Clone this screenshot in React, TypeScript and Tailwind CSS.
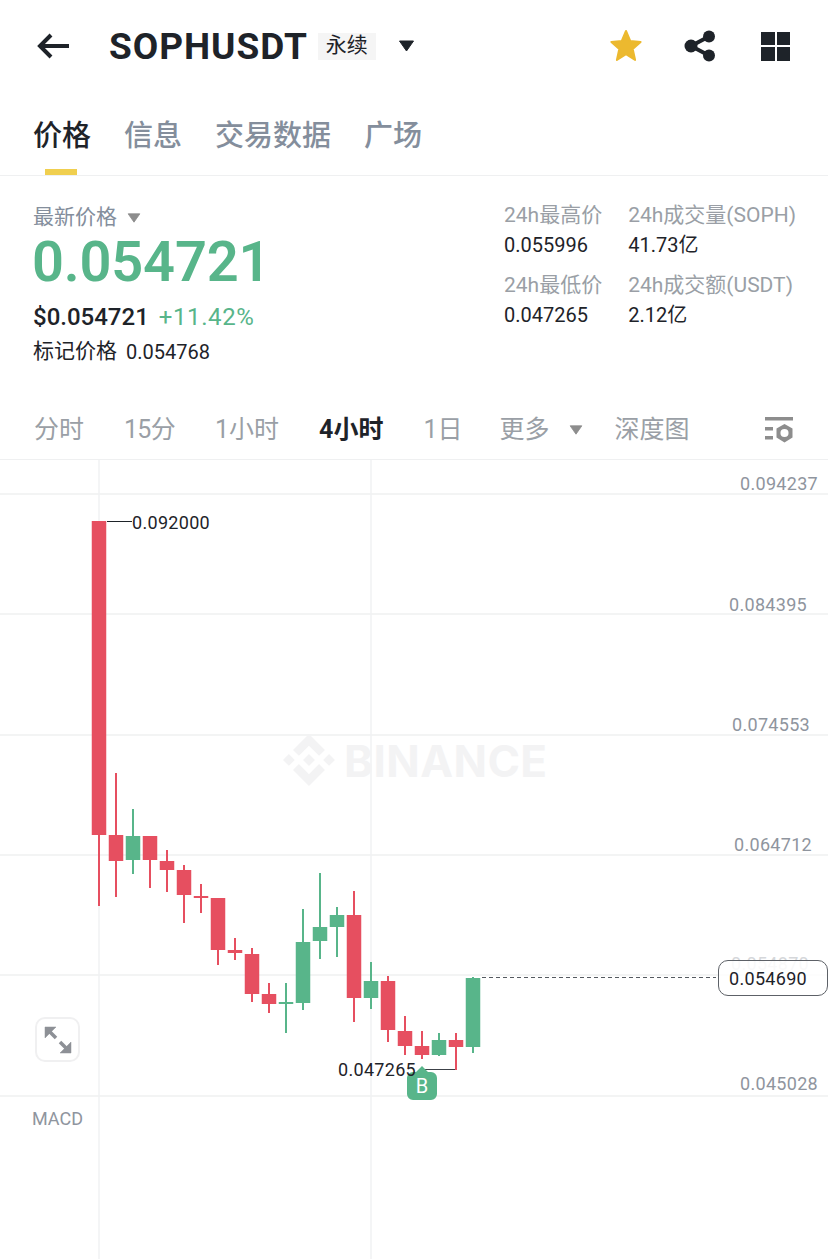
const RED = "#e64f60";
const GREEN = "#58b58a";

// x, wick top, wick bottom, body top, body bottom, rising
const candles: [number, number, number, number, number, boolean][] = [
  [99, 521, 906, 521, 835, false],
  [116, 773, 897, 835, 861, false],
  [133, 809, 874, 836, 860, true],
  [150, 836, 888, 836, 860, false],
  [167, 850, 892, 861, 870, false],
  [184, 865, 923, 870, 895, false],
  [201, 884, 913, 896, 898, false],
  [218, 898, 965, 898, 950, false],
  [235, 938, 960, 950, 953, false],
  [252, 948, 1002, 954, 994, false],
  [269, 983, 1013, 994, 1004, false],
  [286, 983, 1033, 1002, 1004, true],
  [303, 909, 1010, 942, 1003, true],
  [320, 873, 959, 927, 941, true],
  [337, 907, 957, 915, 927, true],
  [354, 891, 1022, 915, 998, false],
  [371, 962, 1009, 981, 998, true],
  [388, 976, 1042, 981, 1030, false],
  [405, 1016, 1055, 1031, 1046, false],
  [422, 1031, 1059, 1046, 1055, false],
  [439, 1033, 1056, 1040, 1055, true],
  [456, 1033, 1070, 1040, 1047, false],
  [473, 977, 1053, 978, 1047, true],
];

const gridYs = [494, 614, 735, 855, 975, 1096];

const priceLabels = [
  { text: "0.094237", left: "left-[740px]", top: "top-[13px]" },
  { text: "0.084395", left: "left-[729px]", top: "top-[134px]" },
  { text: "0.074553", left: "left-[732px]", top: "top-[254px]" },
  { text: "0.064712", left: "left-[734px]", top: "top-[374px]" },
  { text: "0.045028", left: "left-[740px]", top: "top-[613px]" },
];

function Caret({ className }: { className: string }) {
  return (
    <svg viewBox="0 0 16 12" className={className}>
      <path d="M1 1h14L8 11z" fill="currentColor" stroke="currentColor" strokeLinejoin="round" />
    </svg>
  );
}

function Header() {
  return (
    <div className="flex h-[92px] items-center pl-[37px] pr-[38px] text-[#1e2329]">
      <svg viewBox="0 0 32 26" className="h-[26px] w-8" fill="none" stroke="currentColor" strokeWidth="4">
        <path d="M32 13H4M14 2 3 13l11 11" />
      </svg>
      <div className="ml-10 text-[37px] leading-none font-bold tracking-[0.95px]">SOPHUSDT</div>
      <div className="ml-[10px] flex h-[27px] w-[58px] items-center justify-center bg-[#f5f5f5] text-[21px]">永续</div>
      <Caret className="ml-[22px] h-3 w-[17px]" />
      <svg viewBox="0 0 32 34" className="ml-auto mr-[-1px] h-[34px] w-8">
        <path
          d="M16 2l4.2 10 10.4 1-7.9 7 2.4 11L16 25.2 6.9 31l2.4-11-7.9-7 10.4-1z"
          fill="#ecb92f"
          stroke="#ecb92f"
          strokeWidth="2"
          strokeLinejoin="round"
        />
      </svg>
      <svg viewBox="0 0 32 32" className="ml-[43px] h-8 w-8" fill="currentColor">
        <circle cx="25" cy="6.5" r="6" />
        <circle cx="25" cy="25.5" r="6" />
        <circle cx="7" cy="16" r="6.5" />
        <path d="M7 16 25 6.5M7 16l18 9.5" stroke="currentColor" strokeWidth="4" />
      </svg>
      <div className="ml-[45px] grid h-[29px] w-[29px] grid-cols-2 gap-[2px]">
        <div className="bg-[#1e2329]" />
        <div className="bg-[#1e2329]" />
        <div className="bg-[#1e2329]" />
        <div className="bg-[#1e2329]" />
      </div>
    </div>
  );
}

function Tabs() {
  return (
    <div className="flex h-[84px] gap-[33px] border-b border-[#eff0f1] pl-[33px] text-[29px] leading-[88px] font-medium text-[#848e9c]">
      <div className="relative text-[#1e2329]">
        价格
        <div className="absolute bottom-0 left-3 h-[6px] w-8 bg-[#f0cf4f]" />
      </div>
      <div>信息</div>
      <div>交易数据</div>
      <div>广场</div>
    </div>
  );
}

function Stat({ label, value }: { label: string; value: string }) {
  return (
    <div>
      <div className="h-[30px] text-[21px] leading-[30px] whitespace-nowrap text-[#9a9fa6]">{label}</div>
      <div className="mt-[1px] h-[39px] text-[20px] leading-[28px] text-[#1e2329]">{value}</div>
    </div>
  );
}

function Summary() {
  return (
    <div className="flex h-[222px] pl-[33px]">
      <div className="w-[471px] pt-[27px]">
        <div className="flex h-[30px] items-center text-[21px] text-[#848e9c]">
          最新价格
          <Caret className="ml-[10px] h-[10px] w-[14px] text-[#8d8d8d]" />
        </div>
        <div className="-ml-[1px] h-[60px] text-[56px] leading-[58px] font-semibold tracking-[-0.2px] text-[#58b58a]">
          0.054721
        </div>
        <div className="mt-[9px] flex h-[30px] items-center">
          <span className="text-[24px] font-medium text-[#1e2329]">$0.054721</span>
          <span className="ml-[10px] text-[24px] tracking-[0.6px] text-[#58b58a]">+11.42%</span>
        </div>
        <div className="mt-[5px] flex h-[30px] items-center text-[#1e2329]">
          <span className="text-[21px]">标记价格</span>
          <span className="ml-[9px] text-[20px]">0.054768</span>
        </div>
      </div>
      <div className="flex gap-[26px] pt-[24px]">
        <div>
          <Stat label="24h最高价" value="0.055996" />
          <Stat label="24h最低价" value="0.047265" />
        </div>
        <div>
          <Stat label="24h成交量(SOPH)" value="41.73亿" />
          <Stat label="24h成交额(USDT)" value="2.12亿" />
        </div>
      </div>
    </div>
  );
}

function Intervals() {
  return (
    <div className="flex h-[62px] items-center gap-10 border-b border-[#eff0f1] pt-[2px] pl-[34px] text-[25px] text-[#9a9fa6]">
      <div>分时</div>
      <div className="tracking-[-0.7px]">15分</div>
      <div>1小时</div>
      <div className="font-bold text-[#1e2329]">4小时</div>
      <div>1日</div>
      <div className="-ml-[3px] flex items-center">
        更多
        <Caret className="ml-[19px] h-[10px] w-[14px] text-[#8d8d8d]" />
      </div>
      <div className="-ml-2">深度图</div>
      <svg viewBox="0 0 28 26" className="ml-auto mr-[35px] h-[26px] w-7 text-[#8d8d8d]" fill="currentColor">
        <rect x="0" y="0" width="28" height="3.5" />
        <rect x="0" y="10" width="8" height="3.5" />
        <rect x="0" y="19" width="8" height="3.5" />
        <path fillRule="evenodd" d="M19.5 7l8 4.6v9L19.5 25.5l-8-4.9v-9zM19.5 12a4 4 0 1 0 0 8.1 4 4 0 0 0 0-8.1z" />
      </svg>
    </div>
  );
}

function Chart() {
  return (
    <div className="relative h-[799px] overflow-hidden">
      <svg viewBox="0 460 828 799" className="absolute inset-0 h-full w-full">
        {gridYs.map((y) => (
          <line key={y} x1="0" x2="828" y1={y} y2={y} stroke="#eff0f1" strokeWidth="1.5" />
        ))}
        <line x1="99" x2="99" y1="460" y2="1259" stroke="#f1f2f3" strokeWidth="1.5" />
        <line x1="371" x2="371" y1="460" y2="1259" stroke="#f1f2f3" strokeWidth="1.5" />

        <g transform="translate(283 734) scale(0.41)" fill="#f3f3f4">
          <path d="M38.73 53.2l24.59-24.58 24.6 24.6 14.3-14.31L63.32 0 24.43 38.9zM0 63.31l14.3-14.31 14.31 14.31-14.31 14.3zM38.73 73.41l24.59 24.59 24.6-24.6 14.31 14.29-38.9 38.91-38.91-38.88-.02-.02zM98 63.31l14.3-14.31 14.31 14.3-14.31 14.32zM77.83 63.3L63.32 48.78 52.59 59.51l-1.24 1.23-2.54 2.54 14.51 14.5 14.51-14.47z" />
        </g>

        <path d="M107 521.5h25" stroke="#1e2329" strokeWidth="1" fill="none" />
        <path d="M422 1069.5h34" stroke="#3c4147" strokeWidth="1" fill="none" />
        <path d="M482 977.5h234" stroke="#555a60" strokeWidth="1" strokeDasharray="4 3" fill="none" />

        {candles.map(([x, wickTop, wickBottom, bodyTop, bodyBottom, rising]) => (
          <g key={x} fill={rising ? GREEN : RED}>
            <rect x={x - 1} y={wickTop} width="2" height={wickBottom - wickTop} />
            <rect x={x - 7.25} y={bodyTop} width="14.5" height={bodyBottom - bodyTop} />
          </g>
        ))}

        <path
          d="M422 1066l6 6h3a6 6 0 0 1 6 6v16a6 6 0 0 1-6 6h-18a6 6 0 0 1-6-6v-16a6 6 0 0 1 6-6h3z"
          fill={GREEN}
        />
      </svg>

      <div className="absolute top-[281px] left-[344px] font-[Inter,sans-serif] text-[44px] leading-[40px] font-bold tracking-[0.4px] text-[#f3f3f4]">
        BINANCE
      </div>

      {priceLabels.map((p) => (
        <div key={p.text} className={`absolute ${p.left} ${p.top} text-[18px] leading-[22px] tracking-[0.3px] text-[#8f959e]`}>
          {p.text}
        </div>
      ))}
      <div className="absolute top-[493px] left-[731px] text-[18px] leading-[22px] tracking-[0.3px] text-[#d5d7da]">0.054870</div>

      <div className="absolute top-[52px] left-[132px] text-[18px] leading-[22px] tracking-[0.3px] text-[#1e2329]">0.092000</div>
      <div className="absolute top-[599px] left-[338px] text-[18px] leading-[22px] tracking-[0.3px] text-[#1e2329]">0.047265</div>
      <div className="absolute top-[612px] left-[407px] flex h-[28px] w-[30px] items-center justify-center text-[20px] leading-none text-white">B</div>

      <div className="absolute top-[500px] left-[718px] flex h-[36px] w-[110px] items-center rounded-[10px] border-[1.5px] border-[#5d6167] bg-white/85 pl-[10px] text-[18px] tracking-[0.3px] text-[#1e2329]">
        0.054690
      </div>

      <div className="absolute top-[557px] left-[35px] flex h-[45px] w-[45px] items-center justify-center rounded-[10px] border-2 border-[#f0f0f1] bg-white">
        <svg viewBox="0 0 28 28" className="h-7 w-7" fill="#8d9096" stroke="#8d9096">
          <path d="M1 1h11L1 12z" strokeWidth="0.5" />
          <path d="M5 5l7 7" strokeWidth="3.5" />
          <path d="M27 27H16l11-11z" strokeWidth="0.5" />
          <path d="M23 23l-7-7" strokeWidth="3.5" />
        </svg>
      </div>

      <div className="absolute top-[648px] left-[32px] text-[18px] leading-[22px] text-[#8f959e]">MACD</div>
    </div>
  );
}

export default function App() {
  return (
    <div className="h-[1259px] w-[828px] overflow-hidden bg-white font-[Roboto,'Noto_Sans_CJK_SC',sans-serif]">
      <Header />
      <Tabs />
      <Summary />
      <Intervals />
      <Chart />
    </div>
  );
}
